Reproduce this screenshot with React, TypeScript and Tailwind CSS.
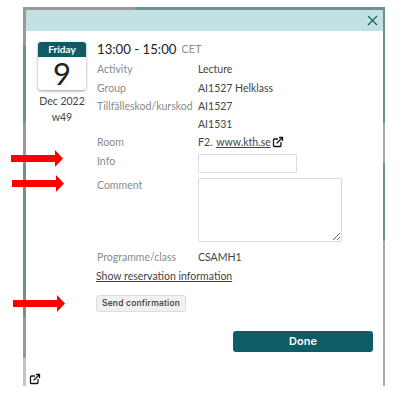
import { X, ExternalLink } from 'lucide-react'

function Arrow({ w }: { w: number }) {
  return (
    <svg width={w} height={17} viewBox={`0 0 ${w} 17`} className="block">
      <path d={`M0 5H${w - 8}V0L${w} 8.5L${w - 8} 17V12H0Z`} fill="#ff0000" />
    </svg>
  )
}

function Row({ label, children }: { label: string; children?: React.ReactNode }) {
  return (
    <div className="flex items-center h-[18.3px]">
      <div className="w-[101px] shrink-0 text-[#8a8a8a] whitespace-nowrap">{label}</div>
      <div className="text-[#444] whitespace-nowrap">{children}</div>
    </div>
  )
}

export default function App() {
  return (
    <div className="relative w-[407px] h-[407px] bg-white overflow-hidden text-[10.5px] font-['Lato',sans-serif] pl-[23px] pt-[7px]">
      <div className="flex w-[362px] h-[379px]">
        <div className="w-[3px] flex flex-col">
          <div className="h-[38px] bg-[#999999]" />
          <div className="h-[78px] bg-[#6f8f94]" />
          <div className="h-[40px] bg-[#999999]" />
          <div className="h-[154px] bg-[#6f8f94]" />
          <div className="h-[41px] bg-[#999999]" />
          <div className="h-[28px] bg-[#c4c4c4]" />
        </div>

        <div className="flex-1 flex flex-col">
          <div className="h-[3px] flex">
            <div className="w-[109px] bg-[#999999]" />
            <div className="flex-1 bg-[#6f8f94]" />
          </div>
          <div className="h-[21px] bg-[#c3e1e3] flex items-center justify-end pr-[2px] text-[#0e5c66]">
            <X size={17} strokeWidth={1.5} />
          </div>

          <div className="flex-1 pl-[11px] pt-[11px]">
            <div className="flex">
              <div className="w-[50px] flex flex-col items-center">
                <div className="w-[48px] rounded-[3px] shadow-[0_1px_3px_rgba(0,0,0,0.4)] bg-white">
                  <div className="h-[15px] rounded-t-[3px] bg-[#0e5c66] text-white text-[10px] font-bold leading-[15px] text-center">Friday</div>
                  <div className="h-[33px] text-[31px] leading-[33px] text-center text-[#222]">9</div>
                </div>
                <div className="mt-[3px] text-[10.5px] leading-[16px] text-[#444] text-center whitespace-nowrap">Dec 2022<br />w49</div>
              </div>

              <div className="ml-[10px] flex-1">
                <div className="h-[16px] flex items-center gap-[5px] mb-[3px] whitespace-nowrap">
                  <span className="text-[13.2px] text-[#222]">13:00 - 15:00</span>
                  <span className="text-[10.5px] text-[#8a8a8a] tracking-[0.4px]">CET</span>
                </div>
                <Row label="Activity">Lecture</Row>
                <Row label="Group">AI1527 Helklass</Row>
                <Row label="Tillfälleskod/kurskod">AI1527</Row>
                <Row label="">AI1531</Row>
                <Row label="Room">
                  <span className="inline-flex items-center gap-[1px]">
                    F2.&nbsp;<span className="underline">www.kth.se</span>
                    <ExternalLink size={12} strokeWidth={2.6} className="text-[#111] -mt-[2px]" />
                  </span>
                </Row>
                <div className="flex mt-[2px]">
                  <div className="w-[101px] text-[#8a8a8a] leading-[15px]">Info</div>
                  <div className="w-[99px] h-[19px] border border-[#dcdcdc] rounded-[1px]" />
                </div>
                <div className="flex mt-[5px]">
                  <div className="w-[101px] text-[#8a8a8a] leading-[14px]">Comment</div>
                  <textarea readOnly className="w-[144px] h-[64px] border border-[#dcdcdc] rounded-[1px] outline-none" />
                </div>
                <div className="mt-[6px]">
                  <Row label="Programme/class">CSAMH1</Row>
                </div>
                <div className="-ml-[1px] leading-[18px] text-[#444] underline whitespace-nowrap">Show reservation information</div>
                <button className="mt-[10px] -ml-[1px] h-[17px] w-[90px] rounded-[3px] border border-[#dddddd] bg-[#f1f1f1] text-[8.5px] font-medium text-[#333] tracking-[0.2px] whitespace-nowrap font-['Inter',sans-serif]">Send confirmation</button>
              </div>
            </div>

            <div className="mt-[19px] pr-[10px] flex justify-end">
              <button className="w-[140px] h-[21px] rounded-[3px] bg-[#0e5c66] text-white text-[11px] font-semibold font-['Inter',sans-serif]">Done</button>
            </div>
            <ExternalLink size={12} strokeWidth={2.6} className="mt-[21px] -ml-[8px] text-[#111]" />
          </div>
        </div>

        <div className="w-[2px] flex flex-col">
          <div className="h-[116px] bg-[#6f8f94]" />
          <div className="h-[40px] bg-[#aaaaaa]" />
          <div className="h-[78px] bg-[#6f8f94]" />
          <div className="flex-1 bg-[#aaaaaa]" />
        </div>
      </div>

      <div className="absolute left-[11px] top-[150px]"><Arrow w={52} /></div>
      <div className="absolute left-[12px] top-[175px]"><Arrow w={52} /></div>
      <div className="absolute left-[13px] top-[295px]"><Arrow w={52} /></div>
    </div>
  )
}
